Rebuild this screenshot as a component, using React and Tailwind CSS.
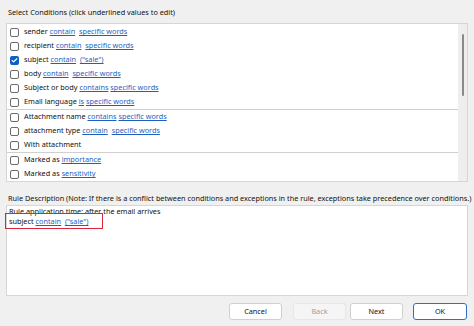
import { Check } from 'lucide-react'

const groups = [
  [
    { label: 'sender', links: ['contain', 'specific words'], wide: true },
    { label: 'recipient', links: ['contain', 'specific words'], wide: true },
    { label: 'subject', links: ['contain', '("sale")'], checked: true, wide: true },
    { label: 'body', links: ['contain', 'specific words'], wide: true },
    { label: 'Subject or body', links: ['contains', 'specific words'] },
    { label: 'Email language', links: ['is', 'specific words'] },
  ],
  [
    { label: 'Attachment name', links: ['contains', 'specific words'] },
    { label: 'attachment type', links: ['contain', 'specific words'], wide: true },
    { label: 'With attachment', links: [] },
  ],
  [
    { label: 'Marked as', links: ['importance'] },
    { label: 'Marked as', links: ['sensitivity'] },
  ],
]

function Link({ children }) {
  return <span className="text-[#1f5fbf] underline underline-offset-1">{children}</span>
}

function Row({ item }) {
  return (
    <div className="flex items-center h-[14px] pl-[3px]">
      {item.checked ? (
        <span className="w-[9px] h-[9px] rounded-[2px] bg-[#0f5fc2] flex items-center justify-center">
          <Check className="w-[7px] h-[7px] text-white" strokeWidth={4} />
        </span>
      ) : (
        <span className="w-[9px] h-[9px] rounded-[2px] border border-[#6b6b6b] bg-white" />
      )}
      <span className="ml-[5px] whitespace-nowrap">
        {item.label}
        {item.links.map((l, i) => (
          <span key={i}>
            {i > 0 && item.wide ? '\u00a0 ' : ' '}
            <Link>{l}</Link>
          </span>
        ))}
      </span>
    </div>
  )
}

export default function App() {
  return (
    <div
      className="w-[474px] h-[326px] bg-[#f0f0f0] text-[#111] text-[7.3px] leading-none flex flex-col px-[6px] overflow-hidden"
      style={{ fontFamily: '"Noto Sans", "Open Sans", sans-serif' }}
    >
      <div className="h-[23px] flex items-center pl-[2px] pt-[3px]">
        Select Conditions (click underlined values to edit)
      </div>

      {/* conditions list */}
      <div className="h-[159px] border border-[#d6d6d6] bg-white flex">
        <div className="flex-1 flex flex-col pt-[1px]">
          {groups.map((g, gi) => (
            <div key={gi} className={gi < groups.length - 1 ? 'border-b border-[#cfcfcf]' : ''}>
              {g.map((item, i) => (
                <Row key={i} item={item} />
              ))}
            </div>
          ))}
        </div>
        <div className="w-[9px] bg-[#eeeeee] flex justify-center pt-[10px]">
          <div className="w-[2px] h-[62px] bg-[#8a8a8a] rounded-full" />
        </div>
      </div>

      <div className="h-[23px] flex items-center pl-[2px] pt-[10px] whitespace-nowrap">
        Rule Description (Note: If there is a conflict between conditions and exceptions in the rule, exceptions take precedence over conditions.)
      </div>

      {/* description */}
      <div className="h-[91px] border border-[#d6d6d6] bg-white px-[2px]">
        <div className="h-[10px] flex items-center pt-[1px]">Rule application time: after the email arrives</div>
        <div className="relative h-[12px] flex items-center">
          subject&nbsp;<Link>contain</Link>&nbsp;&nbsp;<Link>("sale")</Link>
          <div className="absolute left-[-4px] top-[-3px] w-[98px] h-[16px] border-[1.5px] border-[#d9263a]" />
        </div>
      </div>

      {/* buttons */}
      <div className="flex justify-end gap-[4px] mt-[7px] pr-[1px]">
        <button className="w-[53px] h-[17px] bg-white border border-[#d0d0d0] rounded-[3px] text-[7.3px]">Cancel</button>
        <button className="w-[53px] h-[17px] bg-[#f5f5f5] border border-[#e6e6e6] rounded-[3px] text-[7.3px] text-[#a0a0a0] ml-[7px]">Back</button>
        <button className="w-[53px] h-[17px] bg-white border border-[#d0d0d0] rounded-[3px] text-[7.3px]">Next</button>
        <button className="w-[54px] h-[17px] bg-white border border-[#2f6fc4] rounded-[3px] text-[7.3px] ml-[6px]">OK</button>
      </div>
    </div>
  )
}
